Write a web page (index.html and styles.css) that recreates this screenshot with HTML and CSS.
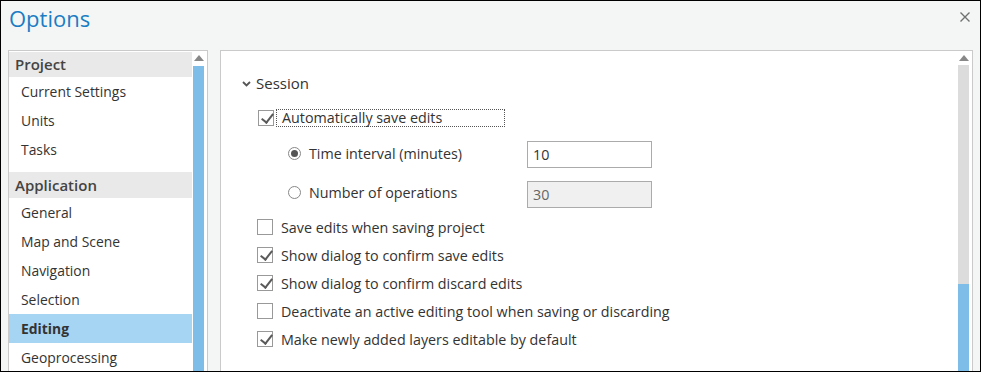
FILE: index.html
```html
<!DOCTYPE html>
<html>
<head>
<meta charset="utf-8">
<link rel="stylesheet" href="styles.css">
</head>
<body>
<div class="window">
  <div class="titlebar">
    <div class="title">Options</div>
    <svg class="close" width="10" height="10" viewBox="0 0 10 10"><path d="M0.5 0.5 L9.5 9.5 M9.5 0.5 L0.5 9.5" stroke="#707070" stroke-width="1.4" fill="none"/></svg>
  </div>
  <div class="main">
    <div class="panel left">
      <div class="list">
        <div class="group">Project</div>
        <div class="item">Current Settings</div>
        <div class="item">Units</div>
        <div class="item">Tasks</div>
        <div class="group group-gap">Application</div>
        <div class="item">General</div>
        <div class="item">Map and Scene</div>
        <div class="item">Navigation</div>
        <div class="item">Selection</div>
        <div class="item selected">Editing</div>
        <div class="item">Geoprocessing</div>
      </div>
      <div class="scrollbar">
        <div class="arrow"><span class="tri"></span></div>
        <div class="thumb"></div>
      </div>
    </div>
    <div class="panel right">
      <div class="content">
        <div class="section">
          <svg class="chev" width="9" height="6" viewBox="0 0 9 6"><path d="M1 1 L4.5 4.5 L8 1" fill="none" stroke="#555" stroke-width="1.8"/></svg>
          <span>Session</span>
        </div>
        <div class="row auto">
          <span class="cb checked"></span>
          <span class="focus">Automatically save edits</span>
        </div>
        <div class="radio-row first">
          <div class="radio-label"><span class="rb on"></span><span>Time interval (minutes)</span></div>
          <div class="field">10</div>
        </div>
        <div class="radio-row second">
          <div class="radio-label"><span class="rb"></span><span>Number of operations</span></div>
          <div class="field disabled">30</div>
        </div>
        <div class="checks">
          <div class="row"><span class="cb"></span><span class="lbl">Save edits when saving project</span></div>
          <div class="row"><span class="cb checked"></span><span class="lbl">Show dialog to confirm save edits</span></div>
          <div class="row"><span class="cb checked"></span><span class="lbl">Show dialog to confirm discard edits</span></div>
          <div class="row"><span class="cb"></span><span class="lbl">Deactivate an active editing tool when saving or discarding</span></div>
          <div class="row"><span class="cb checked"></span><span class="lbl">Make newly added layers editable by default</span></div>
        </div>
      </div>
      <div class="scrollbar vs">
        <div class="arrow"><span class="tri"></span></div>
        <div class="track"></div>
        <div class="thumb"></div>
      </div>
    </div>
  </div>
</div>
</body>
</html>
```
FILE: styles.css
```css
* { box-sizing: border-box; }
html, body { margin: 0; padding: 0; }
body {
  font-family: "Open Sans", "Noto Sans", sans-serif;
  color: #333;
  background: #fff;
}
.window {
  width: 981px;
  height: 372px;
  border: 1px solid #000;
  background: #f4f6f6;
  overflow: hidden;
  display: flex;
  flex-direction: column;
}
.titlebar {
  height: 49px;
  flex: none;
  display: flex;
  align-items: flex-start;
  justify-content: space-between;
  padding-left: 8px;
}
.title {
  font-size: 22px;
  line-height: 30px;
  margin-top: 2px;
  color: #1a7dc4;
}
.close {
  margin-top: 11px;
  margin-right: 10px;
}
.main {
  flex: 1;
  display: flex;
  gap: 12px;
  padding-left: 7px;
  min-height: 0;
}
.panel {
  background: #fff;
  border: 1px solid #cacaca;
  border-bottom: none;
  height: 340px;
  display: flex;
}
.panel.left { width: 200px; padding-right: 3px; }
.panel.right { width: 753px; padding-right: 3px; }
.list { width: 183px; padding-top: 1px; font-size: 13.9px; }
.group {
  height: 25px;
  line-height: 25px;
  background: #e9e9e9;
  padding-left: 6px;
  font-weight: 600;
  font-size: 15px;
  color: #444;
}
.group-gap { margin-top: 8px; height: 26px; line-height: 26px; }
.item {
  height: 29px;
  line-height: 29px;
  padding-left: 12px;
  color: #333;
}
.item.selected { background: #a6d4f3; font-weight: 700; }
.scrollbar {
  width: 11px;
  margin-left: 1px;
  display: flex;
  flex-direction: column;
}
.scrollbar .arrow {
  height: 15px;
  display: flex;
  justify-content: center;
  padding-top: 4px;
  flex: none;
}
.tri {
  width: 0; height: 0;
  border-left: 5px solid transparent;
  border-right: 5px solid transparent;
  border-bottom: 6px solid #888;
}
.scrollbar .thumb { flex: 1; background: #7dbde8; }
.vs .arrow { height: 14px; }
.vs .track { height: 219px; background: #dcdcdc; flex: none; }
.content {
  flex: 1;
  padding-left: 21px;
  padding-top: 22px;
  font-size: 14.3px;
}
.section {
  height: 20px;
  display: flex;
  align-items: center;
  font-size: 15px;
  color: #333;
}
.chev { margin-right: 5px; margin-top: 1px; }
.row {
  display: flex;
  align-items: center;
}
.auto { margin-top: 16px; height: 18px; padding-left: 16px; }
.cb {
  width: 16px; height: 16px;
  border: 1px solid #999;
  background: #fff;
  flex: none;
  position: relative;
}
.cb.checked::after {
  content: "";
  position: absolute;
  left: 5px; top: 0px;
  width: 5px; height: 10px;
  border-right: 2px solid #5a5a5a;
  border-bottom: 2px solid #5a5a5a;
  transform: rotate(38deg);
}
.focus {
  margin-left: 2px;
  width: 229px;
  height: 18px;
  line-height: 16px;
  padding-left: 5px;
  border: 1px dotted #555;
}
.radio-row {
  display: flex;
  align-items: center;
  height: 27px;
  padding-left: 46px;
}
.radio-row.first { margin-top: 14px; }
.radio-row.second { margin-top: 13px; }
.radio-label {
  width: 239px;
  display: flex;
  align-items: center;
  gap: 8px;
  margin-top: -3px;
}
.radio-row.second .radio-label { margin-top: -5px; }
.rb {
  width: 13px; height: 13px;
  border: 1px solid #888;
  border-radius: 50%;
  background: #fff;
  flex: none;
  position: relative;
}
.rb.on::after {
  content: "";
  position: absolute;
  left: 2px; top: 2px;
  width: 7px; height: 7px;
  border-radius: 50%;
  background: #555;
}
.field {
  width: 125px;
  height: 27px;
  border: 1px solid #ababab;
  background: #fff;
  padding-left: 5px;
  line-height: 25px;
  color: #333;
}
.field.disabled { background: #f0f0f0; color: #666; }
.checks { margin-top: 5px; padding-left: 15px; }
.checks .row { height: 28px; }
.lbl { margin-left: 8px; }
```
